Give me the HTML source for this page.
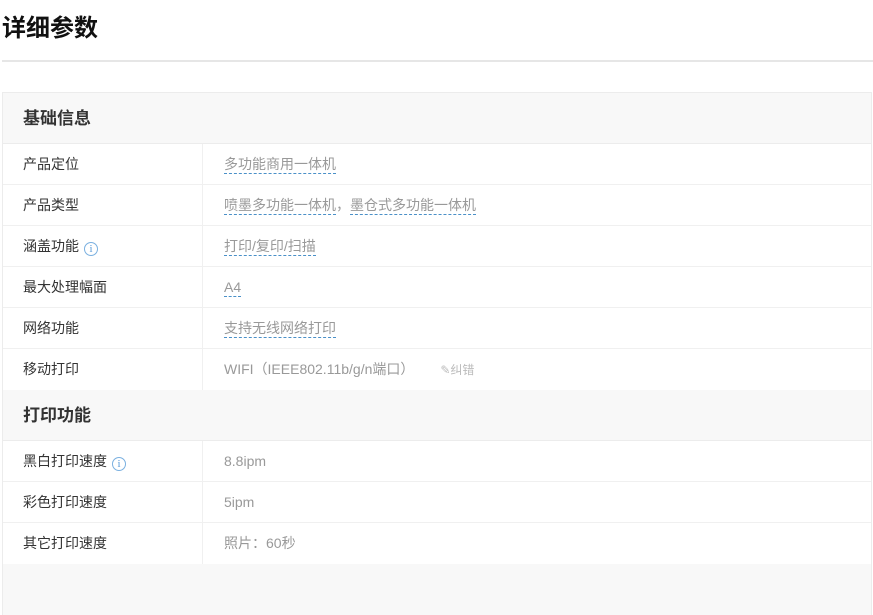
<!DOCTYPE html>
<html><head><meta charset="utf-8"><style>
*{margin:0;padding:0;box-sizing:border-box}
body{width:873px;height:574px;overflow:hidden;background:#fff;font-family:"Liberation Sans","Noto Sans CJK SC",sans-serif;position:relative}
h1{position:absolute;left:2px;top:13px;font-size:24px;line-height:32px;font-weight:bold;color:#111}
.hr{position:absolute;left:2px;right:0;top:60px;height:2px;background:#e6e6e6}
.tbl{position:absolute;left:2px;top:92px;width:870px;border:1px solid #ececec;border-bottom:none}
.sec{height:51px;background:#f8f8f8;font-size:17px;font-weight:bold;color:#333;padding-left:20px;line-height:51px;border-bottom:1px solid #ececec}
.row{height:41px;display:flex;border-bottom:1px solid #f0f0f0;font-size:14px;line-height:40px}
.l{width:200px;padding-left:20px;color:#333;border-right:1px solid #f0f0f0}
.v{padding-left:21px;color:#999}
.u{border-bottom:1px dashed #4a90c8;line-height:18px;display:inline-block}
.i{display:inline-block;width:14px;height:14px;border:1px solid #7ab0e0;border-radius:50%;color:#5a9ad8;font-size:11px;line-height:12px;text-align:center;vertical-align:-1px;margin-left:5px;font-family:"Liberation Serif",serif}
.fix{font-size:12px;color:#bbb;margin-left:26px}
</style></head><body>
<h1>详细参数</h1>
<div class="hr"></div>
<div class="tbl">
<div class="sec">基础信息</div>
<div class="row"><div class="l">产品定位</div><div class="v"><span class="u">多功能商用一体机</span></div></div>
<div class="row"><div class="l">产品类型</div><div class="v"><span class="u">喷墨多功能一体机</span>，<span class="u">墨仓式多功能一体机</span></div></div>
<div class="row"><div class="l">涵盖功能<span class="i">i</span></div><div class="v"><span class="u">打印/复印/扫描</span></div></div>
<div class="row"><div class="l">最大处理幅面</div><div class="v"><span class="u">A4</span></div></div>
<div class="row"><div class="l">网络功能</div><div class="v"><span class="u">支持无线网络打印</span></div></div>
<div class="row" style="border-bottom:none"><div class="l">移动打印</div><div class="v">WIFI（IEEE802.11b/g/n端口）<span class="fix">✎纠错</span></div></div>
<div class="sec">打印功能</div>
<div class="row"><div class="l">黑白打印速度<span class="i">i</span></div><div class="v">8.8ipm</div></div>
<div class="row"><div class="l">彩色打印速度</div><div class="v">5ipm</div></div>
<div class="row" style="border-bottom:none"><div class="l">其它打印速度</div><div class="v">照片：60秒</div></div>
<div class="sec" style="border:none"></div>
</div>
</body></html>
